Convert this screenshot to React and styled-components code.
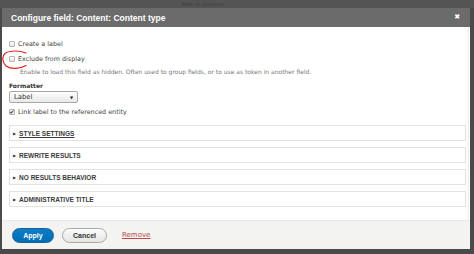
import React from 'react'
import styled, { createGlobalStyle } from 'styled-components'

const GlobalStyle = createGlobalStyle`
  html, body {
    margin: 0;
    padding: 0;
    background: #4a4a4a;
    overflow: hidden;
  }
  body {
    width: 474px;
    height: 254px;
  }
`

const sections = [
  { id: 'style', title: 'Style settings', underline: true },
  { id: 'rewrite', title: 'Rewrite results' },
  { id: 'empty', title: 'No results behavior' },
  { id: 'admin', title: 'Administrative title' },
]

function CheckRow({ checked, children }) {
  return (
    <Row>
      <Box $checked={checked}>{checked ? '✔' : null}</Box>
      <RowLabel>{children}</RowLabel>
    </Row>
  )
}

function App() {
  return (
    <>
      <GlobalStyle />
      <Wrapper>
        <TopStrip>
          <Behind>Table of contents</Behind>
        </TopStrip>
        <Dialog>
          <TitleBar>
            <h1>Configure field: Content: Content type</h1>
            <Close>✖</Close>
          </TitleBar>
          <Content>
            <Annotation viewBox='0 0 28 20' width='28' height='20'>
              <path
                d='M24 3 C18 0.5 8 0 3 3.5 C-0.5 6.5 0.5 13 4 16 C9 19.5 18 19 24 15.5'
                fill='none'
                stroke='#e0201c'
                strokeWidth='1.2'
                strokeLinecap='round'
              />
            </Annotation>
            <CheckRow>Create a label</CheckRow>
            <Spacer $h={5} />
            <CheckRow>Exclude from display</CheckRow>
            <Description>
              Enable to load this field as hidden. Often used to group fields, or to use as
              token in another field.
            </Description>
            <FieldLabel>Formatter</FieldLabel>
            <Select>
              <span>Label</span>
              <Caret>▼</Caret>
            </Select>
            <Spacer $h={4} />
            <CheckRow checked>Link label to the referenced entity</CheckRow>
            <Details>
              {sections.map((s) => (
                <Summary key={s.id}>
                  <Arrow>▶</Arrow>
                  <SummaryText $underline={s.underline}>{s.title}</SummaryText>
                </Summary>
              ))}
            </Details>
          </Content>
          <Footer>
            <Button $primary>Apply</Button>
            <Button>Cancel</Button>
            <RemoveLink href='#'>Remove</RemoveLink>
          </Footer>
        </Dialog>
      </Wrapper>
    </>
  )
}

const Wrapper = styled.main`
  width: 474px;
  height: 254px;
  display: flex;
  flex-direction: column;
  padding-left: 2px;
  box-sizing: border-box;
`

const TopStrip = styled.div`
  height: 8px;
  background: #545454;
  margin-left: -2px;
  overflow: hidden;
  display: flex;
  align-items: center;
  justify-content: center;
  padding-right: 70px;
`

const Behind = styled.span`
  font: 5px 'DejaVu Sans', sans-serif;
  color: #3e3e3e;
  line-height: 6px;
`

const Dialog = styled.section`
  width: 468px;
  height: 241px;
  display: flex;
  flex-direction: column;
  background: #fff;
`

const TitleBar = styled.header`
  height: 19px;
  background: #6b6b6b;
  display: flex;
  align-items: center;
  justify-content: space-between;
  padding: 0 10px 0 9px;

  h1 {
    margin: 0;
    font: bold 8.5px 'Liberation Sans', Arial, sans-serif;
    color: #fff;
  }
`

const Close = styled.span`
  color: #fff;
  font: bold 7px 'DejaVu Sans', sans-serif;
  line-height: 1;
`

const Content = styled.div`
  position: relative;
  flex: 1;
  display: flex;
  flex-direction: column;
  align-items: flex-start;
  padding: 12px 3px 0 7px;
  border-right: 1px solid #ededed;
  margin-right: 1px;
  font-family: 'DejaVu Sans', sans-serif;
  color: #444;
`

const Annotation = styled.svg`
  position: absolute;
  left: 0;
  top: 23px;
`

const Spacer = styled.div`
  height: ${(p) => p.$h}px;
`

const Row = styled.div`
  height: 10px;
  display: flex;
  align-items: center;
  gap: 3px;
  color: #444;
`

const Box = styled.span`
  width: 6px;
  height: 6px;
  box-sizing: border-box;
  border: 1px solid #b4b4b4;
  border-radius: 1px;
  background: linear-gradient(#fff, #e6e6e6);
  display: flex;
  align-items: center;
  justify-content: center;
  font-size: 6px;
  line-height: 1;
  color: #333;
`

const RowLabel = styled.span`
  font-size: 6.4px;
  color: #444;
`

const Description = styled.div`
  margin: 4px 0 0 11px;
  height: 8px;
  line-height: 8px;
  font-size: 6px;
  color: #777;
`

const FieldLabel = styled.div`
  margin-top: 5px;
  height: 10px;
  line-height: 10px;
  font-weight: bold;
  font-size: 6px;
  color: #333;
`

const Select = styled.div`
  width: 69px;
  height: 12px;
  box-sizing: border-box;
  border: 1px solid #a8a8a8;
  border-radius: 2px;
  background: linear-gradient(#fdfdfd, #e9e9e9);
  display: flex;
  align-items: center;
  justify-content: space-between;
  padding: 0 4px;
  font-size: 6.8px;
  color: #333;
`

const Caret = styled.span`
  font-size: 4px;
  color: #222;
`

const Details = styled.div`
  margin-top: 8px;
  width: 457px;
  display: flex;
  flex-direction: column;
  gap: 6px;
`

const Summary = styled.div`
  height: 16px;
  box-sizing: border-box;
  border: 1px solid #e2e2e2;
  display: flex;
  align-items: center;
  padding-left: 3px;
  gap: 3px;
`

const Arrow = styled.span`
  font-size: 4px;
  color: #333;
`

const SummaryText = styled.span`
  font: bold 6.5px 'Liberation Sans', Arial, sans-serif;
  text-transform: uppercase;
  color: #3a3a3a;
  text-decoration: ${(p) => (p.$underline ? 'underline' : 'none')};
`

const Footer = styled.footer`
  height: 29px;
  box-sizing: border-box;
  background: #f3f3f2;
  border-top: 1px solid #e7e7e6;
  display: flex;
  align-items: center;
  padding-left: 10px;
  gap: 8px;
`

const Button = styled.button`
  height: 15px;
  box-sizing: border-box;
  padding: 0;
  width: ${(p) => (p.$primary ? 42 : 45)}px;
  border-radius: 8px;
  border: 1px solid ${(p) => (p.$primary ? '#1a5e95' : '#a9a9a9')};
  background: ${(p) =>
    p.$primary ? 'linear-gradient(#0a7dc5, #006fb5)' : 'linear-gradient(#fcfcfc, #e4e4e3)'};
  color: ${(p) => (p.$primary ? '#fff' : '#333')};
  font: bold 7px 'Liberation Sans', Arial, sans-serif;
`

const RemoveLink = styled.a`
  margin-left: 7px;
  font: 7px 'DejaVu Sans', sans-serif;
  color: #bb4a4a;
  text-decoration: underline;
`

export default App
